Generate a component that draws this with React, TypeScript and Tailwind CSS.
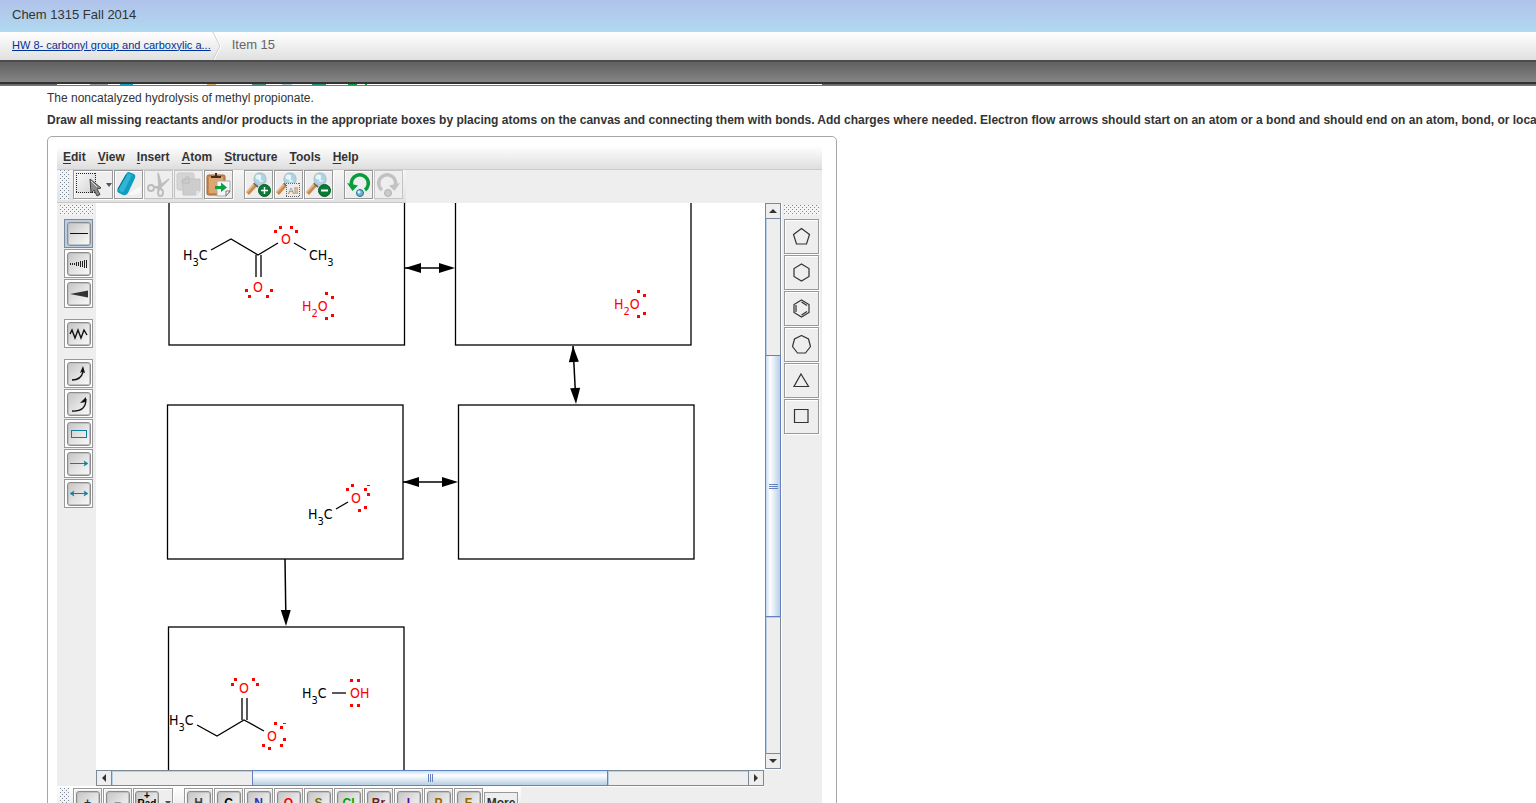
import React from 'react';
import clsx from 'clsx';

type Point = [number, number];

const menus = ['Edit', 'View', 'Insert', 'Atom', 'Structure', 'Tools', 'Help'];

const elements = [
  { symbol: 'H', color: 'text-[#444444]' },
  { symbol: 'C', color: 'text-black' },
  { symbol: 'N', color: 'text-[#2f2fa8]' },
  { symbol: 'O', color: 'text-[#ff0000]' },
  { symbol: 'S', color: 'text-[#6f6f10]' },
  { symbol: 'Cl', color: 'text-[#00a000]' },
  { symbol: 'Br', color: 'text-[#6b2424]' },
  { symbol: 'I', color: 'text-[#660099]' },
  { symbol: 'P', color: 'text-[#996600]' },
  { symbol: 'F', color: 'text-[#996600]' },
];

const Grip = ({ id, className }: { id: string; className: string }) => (
  <svg className={clsx('shrink-0', className)} shapeRendering="crispEdges" aria-hidden="true">
    <defs>
      <pattern id={id} width="4" height="4" patternUnits="userSpaceOnUse">
        <rect width="4" height="4" fill="#f4f4f4" />
        <rect x="0" y="0" width="1" height="1" fill="#7a8a99" />
        <rect x="2" y="2" width="1" height="1" fill="#7a8a99" />
      </pattern>
    </defs>
    <rect width="100%" height="100%" fill={`url(#${id})`} />
  </svg>
);

type ToolButtonProps = {
  label: string;
  className?: string;
  disabled?: boolean;
  children: React.ReactNode;
};

const ToolButton = ({ label, className = 'w-[29px]', disabled, children }: ToolButtonProps) => (
  <button
    type="button"
    aria-label={label}
    disabled={disabled}
    className={clsx(
      'flex h-[29px] shrink-0 items-center justify-center border bg-[#eeeeee]',
      disabled ? 'border-[#c4c4c4]' : 'border-[#999999] shadow-[inset_1px_1px_0_#ffffff,1px_1px_0_#ffffff]',
      className
    )}
  >
    {children}
  </button>
);

// Raised key used inside the drawing and element buttons
const Key = ({ children, className = 'justify-center' }: { children: React.ReactNode; className?: string }) => (
  <span
    className={clsx(
      'flex h-6 w-6 shrink-0 items-center rounded-[3px] border border-[#8c8c8c] bg-linear-to-br from-[#c4c4c4] via-[#e2e2e2] to-[#fafafa] shadow-[inset_0_0_0_1px_#c0c0c0]',
      className
    )}
  >
    {children}
  </span>
);

const DrawButton = ({ label, active, children }: { label: string; active?: boolean; children: React.ReactNode }) => (
  <button
    type="button"
    aria-label={label}
    aria-pressed={active}
    className={clsx(
      'flex h-[29px] w-[29px] items-center justify-center border',
      active ? 'border-[#7a8a99] bg-[#b8cfe5]' : 'border-[#999999] bg-white'
    )}
  >
    <Key>
      <svg width="20" height="20" viewBox="0 0 20 20" fill="none" className="shrink-0">
        {children}
      </svg>
    </Key>
  </button>
);

const Magnifier = ({ children }: { children: React.ReactNode }) => (
  <svg width="27" height="27" viewBox="0 0 27 27" className="shrink-0">
    <path d="M1 21 L9 12 L12 15 L4 24 Z" fill="#c98a50" />
    <path d="M1 21 L9 12 L10 13.500 L2 22 Z" fill="#f0b880" />
    <path d="M9 12 L13 16" stroke="#666" strokeWidth="2" />
    <circle cx="15" cy="8" r="6" fill="#a9d7ea" stroke="#b9c4c8" strokeWidth="1.5" />
    <circle cx="13" cy="6" r="2.5" fill="#e2f5fb" />
    <path d="M15 4 V10 H18" stroke="#ffffff" strokeWidth="1.2" fill="none" />
    {children}
  </svg>
);

const MainToolbar = () => (
  <div className="flex h-[33px] w-[349px] items-start border-b border-[#c8c8c8] bg-linear-to-b from-[#f6f6f6] to-[#e2e2e2] pl-[3px]">
    <Grip id="grip-main" className="mr-1 h-[30px] w-[9px]" />
    <div className="flex gap-[11px]">
      <div className="flex gap-px">
        <ToolButton label="Select" className="w-10">
          <svg width="38" height="27" viewBox="0 0 38 27" className="shrink-0">
            <defs>
              <linearGradient id="sel" x1="0" y1="0" x2="1" y2="1">
                <stop offset="0" stopColor="#fafafa" />
                <stop offset="1" stopColor="#d2d2d2" />
              </linearGradient>
            </defs>
            <rect x="2" y="2" width="20" height="20" fill="url(#sel)" />
            <path d="M2 2.500 H22 M2 21.500 H22 M2.500 2 V22 M21.500 2 V22" stroke="#222" strokeDasharray="1 1" />
            <path d="M16 8 L17 22 L20 19 L23 25 L26 23.500 L23 18 L27 17 Z" fill="#8c8c8c" stroke="#444" />
            <path d="M17 10 L23 16" stroke="#ddd" />
            <path d="M32 12 H38 L35 16 Z" fill="#445566" />
          </svg>
        </ToolButton>
        <ToolButton label="Erase">
          <svg width="27" height="27" viewBox="0 0 27 27" className="shrink-0">
            <path d="M13 23 L26 15 L25 22 L18 24 Z" fill="#f8f8f8" />
            <path d="M11 3 Q12 1 14 1 L19 3 Q21 4 20 7 L13 22 Q11 25 8 24 L4 22 Q1 21 3 17 Z" fill="#0f9dc0" />
            <path d="M12 4 Q13 2 15 3 L17 4 L9 20 Q8 22 5 20 L4 18 Z" fill="#31b5d5" />
            <path d="M11 4 L3 18" stroke="#0b7290" />
          </svg>
        </ToolButton>
        <ToolButton label="Cut" disabled>
          <svg width="27" height="27" viewBox="0 0 27 27" fill="none" className="shrink-0" stroke="#bdbdbd">
            <path d="M13 2 L14 16 L16 12 Z M24 8 L12 17 L14 18 Z" fill="#c4c4c4" strokeWidth="1.500" />
            <circle cx="6" cy="17" r="3" strokeWidth="2" />
            <ellipse cx="15.500" cy="21.500" rx="2.500" ry="3.500" strokeWidth="2" />
            <path d="M9 16 L14 16 L15 18" strokeWidth="2" />
          </svg>
        </ToolButton>
        <ToolButton label="Copy" disabled>
          <svg width="27" height="27" viewBox="0 0 27 27" className="shrink-0">
            <rect x="2" y="2" width="17" height="17" rx="2" fill="#d4d4d4" stroke="#cacaca" />
            <path d="M8 8 H25 V20 L21 24 H8 Z" fill="#cdcdcd" stroke="#c4c4c4" />
            <path d="M7 9 H11 V6 H14 V12 H7 Z" fill="none" stroke="#bcbcbc" />
            <path d="M25 20 H21 V24 Z" fill="#e4e4e4" />
          </svg>
        </ToolButton>
        <ToolButton label="Paste">
          <svg width="27" height="27" viewBox="0 0 27 27" className="shrink-0">
            <rect x="2" y="4" width="18" height="20" rx="1.500" fill="#c98850" stroke="#a5672f" />
            <rect x="4" y="6" width="14" height="16" fill="#dca670" />
            <path d="M6 7 V5 H10 V2 H12 V5 H16 V7 Z" fill="#4b2b16" />
            <path d="M12 10 H25 V21 L21 25 H12 Z" fill="#f6f6f6" stroke="#aaa" />
            <path d="M25 20 H21 V25 Z" fill="#fff" stroke="#777" />
            <path d="M10 15 H16 V11.500 L22 16.500 L16 21 V18 H10 Z" fill="#09a23c" />
          </svg>
        </ToolButton>
      </div>
      <div className="flex gap-px">
        <ToolButton label="Zoom in">
          <Magnifier>
            <circle cx="19.500" cy="19.500" r="6" fill="#087c35" stroke="#055a26" />
            <path d="M16 19.500 H23 M19.500 16 V23" stroke="#fff" strokeWidth="1.500" />
          </Magnifier>
        </ToolButton>
        <ToolButton label="Zoom all">
          <Magnifier>
            <rect x="11" y="12" width="14" height="14" fill="#ececec" />
            <path d="M11 12.500 H25 M11 25.500 H25 M11.500 12 V26 M24.500 12 V26" stroke="#666" strokeDasharray="1 1" />
            <text x="13" y="23" fontSize="9" fill="#777" fontFamily="Liberation Sans, sans-serif">All</text>
          </Magnifier>
        </ToolButton>
        <ToolButton label="Zoom out">
          <Magnifier>
            <circle cx="19.500" cy="19.500" r="6" fill="#087c35" stroke="#055a26" />
            <path d="M16 19.500 H23" stroke="#fff" strokeWidth="2" />
          </Magnifier>
        </ToolButton>
      </div>
      <div className="flex gap-px">
        <ToolButton label="Undo">
          <svg width="27" height="27" viewBox="0 0 27 27" className="shrink-0">
            <path d="M6.500 14 A8.500 8.500 0 1 1 20 19" fill="none" stroke="#0a9c3c" strokeWidth="3.500" />
            <path d="M2 12 L13 14.500 L7.500 20 Z" fill="#0a9c3c" />
            <circle cx="15" cy="22" r="3.500" fill="#63b6cf" stroke="#236f8c" />
            <circle cx="14" cy="21" r="1.500" fill="#d9f3fb" />
          </svg>
        </ToolButton>
        <ToolButton label="Redo" disabled>
          <svg width="27" height="27" viewBox="0 0 27 27" className="shrink-0">
            <path d="M20.500 14 A8.500 8.500 0 1 0 7 19" fill="none" stroke="#c2c2c2" strokeWidth="3.500" />
            <path d="M25 12 L14 14.500 L19.500 20 Z" fill="#c2c2c2" />
            <circle cx="13" cy="22" r="3.500" fill="#cbcbcb" stroke="#b2b2b2" />
          </svg>
        </ToolButton>
      </div>
    </div>
  </div>
);

const DrawTools = () => (
  <div className="w-[39px] shrink-0 bg-[#eeeeee] pt-[2px]">
    <Grip id="grip-left" className="ml-[3px] block h-[10px] w-[34px]" />
    <div className="mt-1 ml-[7px] flex flex-col gap-[11px]">
      <div className="flex flex-col gap-px">
        <DrawButton label="Single bond" active>
          <path d="M1 9.500 H19" stroke="#111" strokeWidth="1" />
        </DrawButton>
        <DrawButton label="Hashed bond">
          <path
            d="M1.500 9 V11 M3.500 9 V11 M5.500 9 V11 M7.500 8 V12 M9.500 8 V12 M11.500 7 V13 M13.500 7 V13 M15.500 6 V14 M17.500 6 V14"
            stroke="#222"
            strokeWidth="1"
          />
        </DrawButton>
        <DrawButton label="Wedge bond">
          <path d="M1 10 L19 6.500 V13.500 Z" fill="#333" />
        </DrawButton>
      </div>
      <DrawButton label="Chain">
        <path d="M1 10 L3 6 L6 14 L9 6 L12 14 L15 6 L18 11" stroke="#111" strokeWidth="1.400" />
      </DrawButton>
      <div className="flex flex-col gap-px">
        <DrawButton label="Full electron arrow">
          <path d="M3 16 Q12 16 14 8" stroke="#111" strokeWidth="1.300" />
          <path d="M14 2 L16 9 L13 8 L11 9 Z" fill="#111" />
        </DrawButton>
        <DrawButton label="Half electron arrow">
          <path d="M3 17 Q17 18 17 5" stroke="#111" strokeWidth="1.300" />
          <path d="M17 3 V8 L11 9 Z" fill="#111" />
        </DrawButton>
        <DrawButton label="Rectangle">
          <rect x="2.500" y="6.500" width="15" height="7" stroke="#0f7f9f" />
        </DrawButton>
        <DrawButton label="Arrow">
          <path d="M1 9.500 H18" stroke="#0f7f9f" />
          <path d="M15 7 L19 9.500 L15 12 L16 9.500 Z" fill="#0f7f9f" stroke="#0f7f9f" strokeWidth="0.500" />
        </DrawButton>
        <DrawButton label="Double arrow">
          <path d="M2 9.500 H18" stroke="#0f7f9f" />
          <path
            d="M15 7 L19 9.500 L15 12 L16 9.500 Z M5 7 L1 9.500 L5 12 L4 9.500 Z"
            fill="#0f7f9f"
            stroke="#0f7f9f"
            strokeWidth="0.500"
          />
        </DrawButton>
      </div>
    </div>
  </div>
);

const rings = [
  { label: 'Cyclopentane', path: 'M9.500 1.500 L17.500 7.500 L14.500 17 H4.500 L1.500 7.500 Z' },
  { label: 'Cyclohexane', path: 'M9.500 1 L17 5.500 V13.500 L9.500 18 L2 13.500 V5.500 Z' },
  {
    label: 'Benzene',
    path: 'M9.500 1 L17 5.500 V13.500 L9.500 18 L2 13.500 V5.500 Z M4 6 V13 M9.500 3 L15 6.500 M9.500 16 L15 12.500',
  },
  { label: 'Cycloheptane', path: 'M9.500 0.500 L16.500 4 L18.500 11.500 L13.500 18 H5.500 L0.500 11.500 L2.500 4 Z' },
  { label: 'Cyclopropane', path: 'M9 3 L16.500 15.500 H2 Z' },
  { label: 'Cyclobutane', path: 'M2.500 2.500 H16 V15.500 H2.500 Z' },
];

const RingTools = () => (
  <div className="w-10 shrink-0 pt-[2px]">
    <Grip id="grip-right" className="ml-[2px] block h-[10px] w-9" />
    <div className="mt-1 ml-[2px] flex flex-col gap-px">
      {rings.map((ring) => (
        <button
          key={ring.label}
          type="button"
          aria-label={ring.label}
          className="flex h-[35px] w-[35px] items-center justify-center border border-[#999999] shadow-[inset_1px_1px_0_#ffffff,1px_1px_0_#ffffff]"
        >
          <svg width="19" height="19" viewBox="0 0 19 19" fill="none" stroke="#333" strokeWidth="1.200">
            <path d={ring.path} />
          </svg>
        </button>
      ))}
    </div>
  </div>
);

const Box = ({ x, y, height }: { x: number; y: number; height: number }) => (
  <rect x={x} y={y} width="235.500" height={height} fill="none" stroke="#000" strokeWidth="1.300" />
);

const Arrow = ({ from, to, double }: { from: Point; to: Point; double?: boolean }) => {
  const length = Math.hypot(to[0] - from[0], to[1] - from[1]);
  const angle = (Math.atan2(to[1] - from[1], to[0] - from[0]) * 180) / Math.PI;
  return (
    <g transform={`translate(${from[0]} ${from[1]}) rotate(${angle})`}>
      <path d={`M0 0 H${length - 8}`} stroke="#000" strokeWidth="1.500" />
      <path d={`M${length} 0 l-16 -5 v10 Z`} />
      {double && <path d="M0 0 l16 -5 v10 Z" />}
    </g>
  );
};

const Dots = ({ at }: { at: Point[] }) => (
  <g fill="#ff0000" shapeRendering="crispEdges">
    {at.map(([x, y]) => (
      <rect key={`${x}-${y}`} x={x - 1} y={y - 1} width="3" height="3" />
    ))}
  </g>
);

const Label = ({ x, y, red, children }: { x: number; y: number; red?: boolean; children: string }) => (
  <text x={x} y={y} fill={red ? '#ff0000' : '#000000'}>
    {children.split('').map((char, i) =>
      /\d/.test(char) ? (
        <tspan key={i} dy="6" fontSize="11">{char}</tspan>
      ) : (
        <tspan key={i} dy={i > 0 && /\d/.test(children[i - 1]) ? -6 : 0}>{char}</tspan>
      )
    )}
  </text>
);

const Canvas = () => (
  <svg
    width="669"
    height="567"
    viewBox="96 203 669 567"
    className="block shrink-0 bg-white"
    fontFamily="'DejaVu Sans Condensed', 'Liberation Sans', sans-serif"
    fontSize="14"
    role="img"
    aria-label="Reaction mechanism"
  >
    <Box x={169} y={190} height={155} />
    <Box x={455.500} y={190} height={155} />
    <Box x={167.500} y={405} height={154} />
    <Box x={458.500} y={405} height={154} />
    <Box x={168.500} y={627} height={155} />

    <Arrow from={[405, 268]} to={[455, 268]} double />
    <Arrow from={[573, 346]} to={[576, 404]} double />
    <Arrow from={[403, 482]} to={[458, 482]} double />
    <Arrow from={[285, 559]} to={[286, 626]} />

    <g stroke="#000" strokeWidth="1.300" fill="none">
      <path d="M211 250 L231 239 L258 255 L278 243 M294 243 L306 250" />
      <path d="M256 255 V277 M261 255 V277" />
      <path d="M336 509 L348 502" />
      <path d="M197 725 L217 736 L244 720 L264 731" />
      <path d="M242 720 V698 M247 720 V698" />
      <path d="M332 693 H346" />
    </g>

    <Label x={183} y={260}>H3C</Label>
    <Label x={309} y={260}>CH3</Label>
    <Label x={281} y={244} red>O</Label>
    <Label x={253} y={292} red>O</Label>
    <Label x={302} y={311} red>H2O</Label>
    <Label x={614} y={309} red>H2O</Label>
    <Label x={308} y={519}>H3C</Label>
    <Label x={351} y={503} red>O</Label>
    <Label x={169} y={725}>H3C</Label>
    <Label x={239} y={693} red>O</Label>
    <Label x={267} y={741} red>O</Label>
    <Label x={302} y={698}>H3C</Label>
    <Label x={350} y={698} red>OH</Label>

    <Dots at={[[275, 231], [280, 227], [291, 227], [296, 231]]} />
    <Dots at={[[246, 290], [249, 296], [267, 296], [271, 290]]} />
    <Dots at={[[326, 293], [332, 297], [332, 315], [326, 318]]} />
    <Dots at={[[638, 291], [644, 295], [644, 313], [638, 316]]} />
    <Dots at={[[347, 489], [352, 485], [365, 489], [368, 494], [365, 507], [359, 510]]} />
    <Dots at={[[232, 684], [235, 679], [253, 679], [257, 684]]} />
    <Dots at={[[275, 723], [281, 727], [284, 739], [281, 745], [269, 748], [263, 745]]} />
    <Dots at={[[351, 680], [358, 680], [351, 705], [358, 705]]} />
    <path d="M367 485.500 H370 M283 723.500 H286" stroke="#ff0000" />
  </svg>
);

const VerticalScroll = () => (
  <div className="flex h-[567px] w-[17px] shrink-0 flex-col border-b border-white bg-white pr-px">
    <div className="flex flex-1 flex-col border border-[#7a8a99] bg-[#eeeeee]">
      <button type="button" aria-label="Scroll up" className="flex h-[15px] items-center justify-center border-b border-[#7a8a99]">
        <svg width="8" height="4" viewBox="0 0 8 4"><path d="M4 0 L8 4 H0 Z" fill="#333" /></svg>
      </button>
      <div className="h-[136px] border-l border-[#b8cfe5]" />
      <div className="-mx-px flex h-[262px] flex-col items-center justify-center gap-px border border-[#6382bf] bg-linear-to-r from-[#c8ddf2] via-white via-30% to-[#b8cfe5]">
        <span className="h-px w-[9px] bg-[#6382bf]" />
        <span className="h-px w-[9px] bg-[#6382bf]" />
        <span className="h-px w-[9px] bg-[#6382bf]" />
      </div>
      <div className="flex-1 border-t border-l border-[#b8cfe5]" />
      <button type="button" aria-label="Scroll down" className="flex h-[15px] items-center justify-center border-t border-[#7a8a99]">
        <svg width="8" height="4" viewBox="0 0 8 4"><path d="M4 4 L8 0 H0 Z" fill="#333" /></svg>
      </button>
    </div>
  </div>
);

const HorizontalScroll = () => (
  <div className="flex h-4 w-[668px] border border-[#7a8a99] bg-[#eeeeee] shadow-[0_1px_0_#ffffff]">
    <button type="button" aria-label="Scroll left" className="flex w-[15px] items-center justify-center border-r border-[#7a8a99]">
      <svg width="4" height="8" viewBox="0 0 4 8"><path d="M0 4 L4 0 V8 Z" fill="#333" /></svg>
    </button>
    <div className="w-[140px] border-t border-l border-[#b8cfe5]" />
    <div className="-my-px flex w-[356px] items-center justify-center gap-px border border-[#6382bf] bg-linear-to-b from-[#c8ddf2] via-white via-30% to-[#b8cfe5]">
      <span className="h-2 w-px bg-[#6382bf]" />
      <span className="h-2 w-px bg-[#6382bf]" />
      <span className="h-2 w-px bg-[#6382bf]" />
    </div>
    <div className="flex-1 border-t border-l border-[#b8cfe5]" />
    <button type="button" aria-label="Scroll right" className="flex w-[15px] items-center justify-center border-l border-[#7a8a99]">
      <svg width="4" height="8" viewBox="0 0 4 8"><path d="M4 4 L0 0 V8 Z" fill="#333" /></svg>
    </button>
  </div>
);

const AtomToolbar = () => (
  <div className="flex h-8 w-[464px] items-start bg-linear-to-b from-white to-[#e2e2e2] pt-[2px] pl-[3px] font-bold">
    <Grip id="grip-bottom" className="mr-1 h-[30px] w-[9px]" />
    <div className="flex gap-[11px]">
      <div className="flex gap-px">
        <ToolButton label="Positive charge">
          <Key>+</Key>
        </ToolButton>
        <ToolButton label="Negative charge">
          <Key>−</Key>
        </ToolButton>
        <ToolButton label="Radical" className="w-10">
          <Key className="flex-col text-[10px] leading-[8px] text-black">
            <span>+</span>
            <span>Rad</span>
          </Key>
          <svg width="6" height="4" viewBox="0 0 6 4" className="ml-[6px] shrink-0"><path d="M0 0 H6 L3 4 Z" fill="#445566" /></svg>
        </ToolButton>
      </div>
      <div className="flex gap-px">
        {elements.map((el) => (
          <ToolButton key={el.symbol} label={el.symbol}>
            <Key className={clsx('justify-center', el.color)}>{el.symbol}</Key>
          </ToolButton>
        ))}
        <button type="button" className="mt-1 h-[21px] w-[34px] border border-[#999999] bg-[#eeeeee] text-[#333333]">
          More
        </button>
      </div>
    </div>
  </div>
);

const App = () => (
  <div className="flex h-screen flex-col overflow-hidden bg-white font-['Liberation_Sans',Arial,sans-serif] text-xs text-[#333333]">
    <header className="flex h-8 shrink-0 items-center border-b border-[#c4d4dc] bg-linear-to-b from-[#b0c2ea] to-[#b0d8f0] px-3 pb-[2px] text-[13px]">
      <h1>Chem 1315 Fall 2014</h1>
    </header>

    <nav className="flex h-7 shrink-0 items-center bg-linear-to-b from-white to-[#e0e0e0] pl-3">
      <a href="#" className="pb-[2px] text-[11px] text-[#003399] underline">HW 8- carbonyl group and carboxylic a...</a>
      <svg width="10" height="28" viewBox="0 0 10 28" fill="none" className="mr-[10px] ml-px">
        <path d="M1 0 L8 14 L1 28" stroke="#c8c8c8" />
        <path d="M2 0 L9 14 L2 28" stroke="#ffffff" />
      </svg>
      <span className="pb-[2px] text-[13px] text-[#666666]">Item 15</span>
    </nav>

    <div className="h-6 shrink-0 border-t-2 border-b-2 border-t-[#4c4c4c] border-b-[#333333] bg-linear-to-b from-[#5f605f] to-[#858585]" />
    <div className="h-[2px] shrink-0 border-b border-[#777777] bg-[#666666] pl-[57px]">
      <div className="flex h-px w-[765px] bg-white">
        <span className="ml-[33px] w-[18px] bg-[#999999]" />
        <span className="ml-3 w-[13px] bg-[#0f9dc0]" />
        <span className="ml-[74px] w-[9px] bg-[#dca670]" />
        <span className="ml-9 w-[14px] bg-[#4a8a7c]" />
        <span className="ml-4 w-[10px] bg-[#a9c7d4]" />
        <span className="ml-5 w-[14px] bg-[#2a8a7c]" />
        <span className="ml-[22px] w-[9px] bg-[#0a9c3c]" />
        <span className="ml-2 w-[2px] bg-[#0a9c3c]" />
      </div>
    </div>

    <main className="pt-1 pl-[47px]">
      <p className="leading-4">The noncatalyzed hydrolysis of methyl propionate.</p>
      <p className="mt-[6px] leading-4 font-bold whitespace-nowrap">
        Draw all missing reactants and/or products in the appropriate boxes by placing atoms on the canvas and
        connecting them with bonds. Add charges where needed. Electron flow arrows should start on an atom or a bond
        and should end on an atom, bond, or location where a new bond should be created.
      </p>

      <section className="mt-2 w-[790px] rounded-[5px] border border-[#a6a6a6] px-[9px] py-[9px]">
        <div className="w-[765px] bg-[#eeeeee]">
          <div className="flex h-6 items-center gap-3 border-b border-[#cccccc] bg-linear-to-b from-white to-[#dedede] pl-[6px] pb-[2px] font-bold">
            {menus.map((name) => (
              <button key={name} type="button">
                <span className="underline underline-offset-2">{name[0]}</span>
                {name.slice(1)}
              </button>
            ))}
          </div>
          <MainToolbar />
          <div className="flex">
            <DrawTools />
            <Canvas />
            <VerticalScroll />
            <RingTools />
          </div>
          <div className="pl-[39px]">
            <HorizontalScroll />
          </div>
          <AtomToolbar />
        </div>
      </section>
    </main>
  </div>
);

export default App;
